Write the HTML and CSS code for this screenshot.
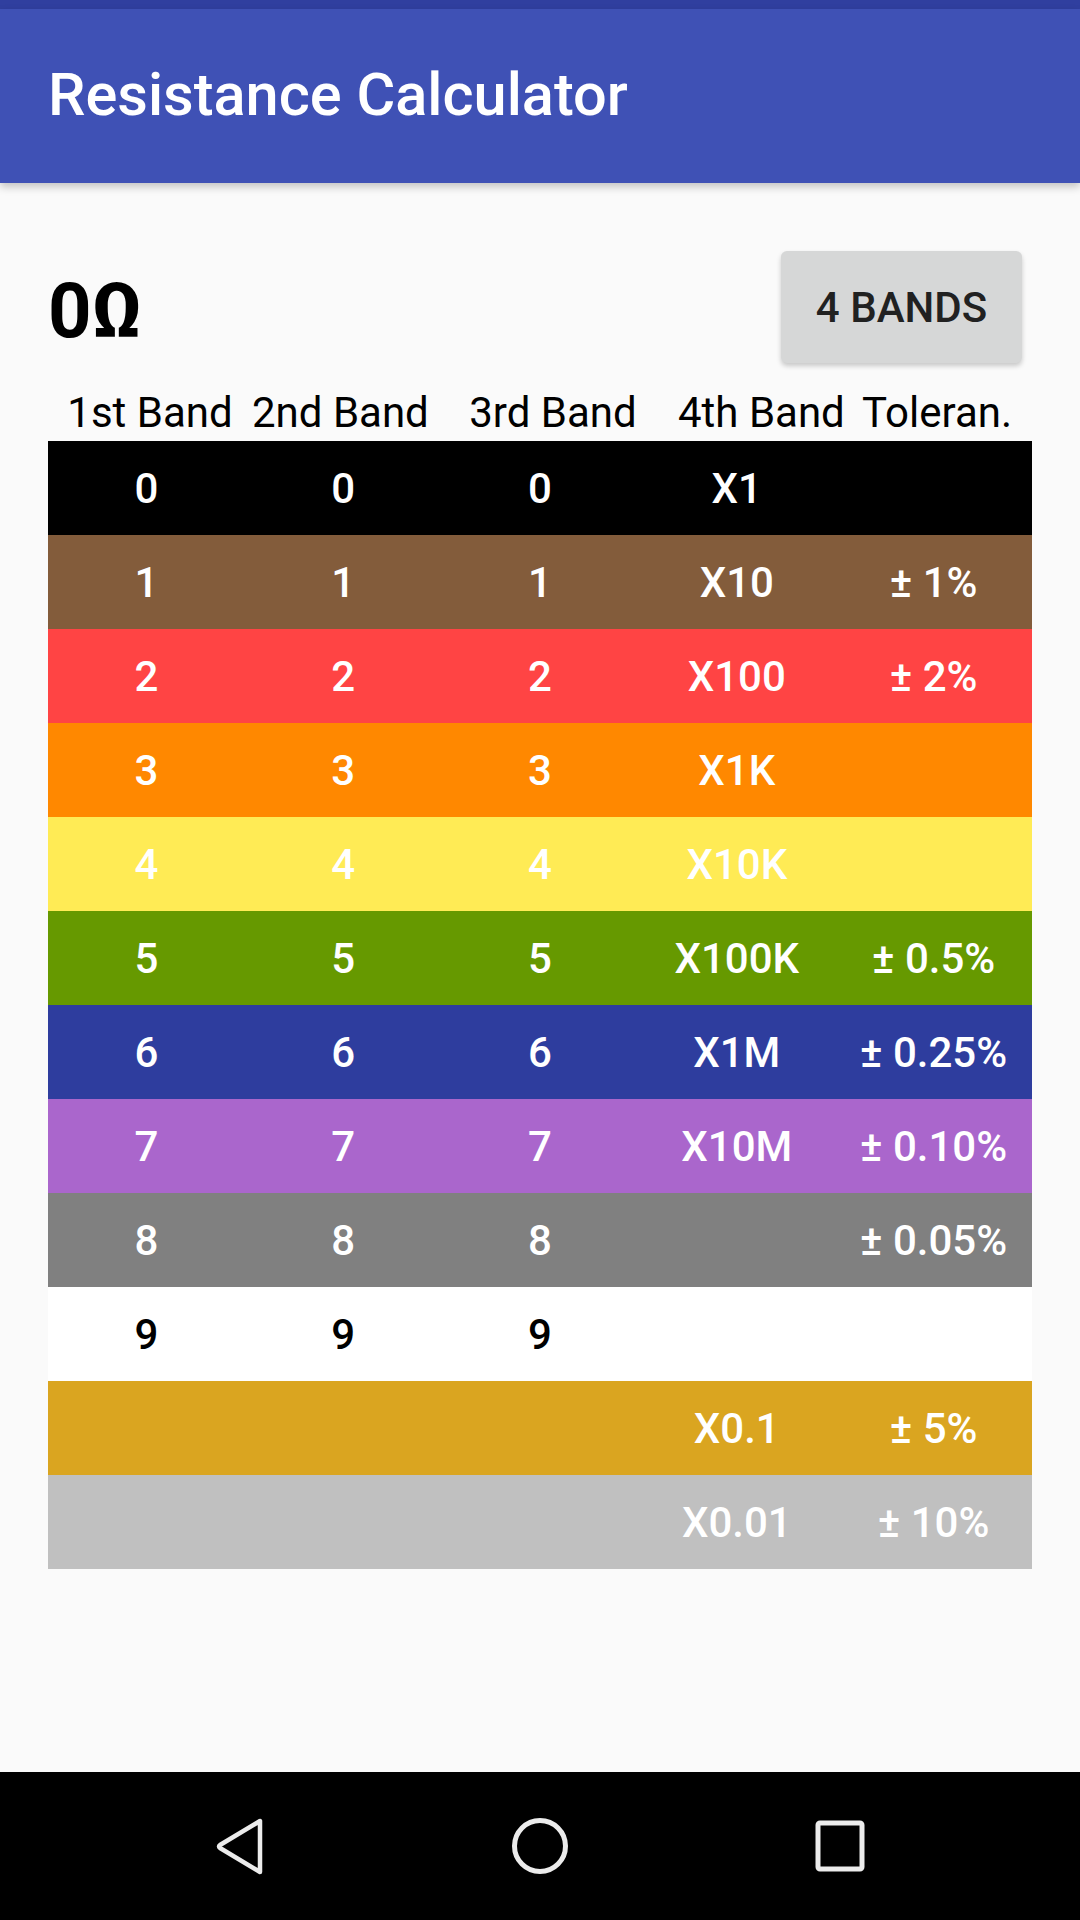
FILE: index.html
```html
<!DOCTYPE html>
<html lang="en">
<head>
    <meta charset="UTF-8">
    <meta name="viewport" content="width=device-width, initial-scale=1.0">
    <title>Resistance Calculator</title>
    <link rel="stylesheet" href="styles.css">
</head>
<body>
    <div class="screen">
        <div class="status-bar"></div>
        <header class="app-bar">
            <h1>Resistance Calculator</h1>
        </header>

        <main class="content">
            <div class="result-row">
                <div class="result">0Ω</div>
                <button class="bands-button">4 BANDS</button>
            </div>

            <div class="band-heading">
                <span>1st Band</span>
                <span>2nd Band</span>
                <span>3rd Band</span>
                <span>4th Band</span>
                <span>Toleran.</span>
            </div>

            <div class="band-table">
                <div class="band-row black"><span>0</span><span>0</span><span>0</span><span>X1</span><span></span></div>
                <div class="band-row brown"><span>1</span><span>1</span><span>1</span><span>X10</span><span>± 1%</span></div>
                <div class="band-row red"><span>2</span><span>2</span><span>2</span><span>X100</span><span>± 2%</span></div>
                <div class="band-row orange"><span>3</span><span>3</span><span>3</span><span>X1K</span><span></span></div>
                <div class="band-row yellow"><span>4</span><span>4</span><span>4</span><span>X10K</span><span></span></div>
                <div class="band-row green"><span>5</span><span>5</span><span>5</span><span>X100K</span><span>± 0.5%</span></div>
                <div class="band-row blue"><span>6</span><span>6</span><span>6</span><span>X1M</span><span>± 0.25%</span></div>
                <div class="band-row violet"><span>7</span><span>7</span><span>7</span><span>X10M</span><span>± 0.10%</span></div>
                <div class="band-row grey"><span>8</span><span>8</span><span>8</span><span></span><span>± 0.05%</span></div>
                <div class="band-row white"><span>9</span><span>9</span><span>9</span><span></span><span></span></div>
                <div class="band-row gold"><span></span><span></span><span></span><span>X0.1</span><span>± 5%</span></div>
                <div class="band-row silver"><span></span><span></span><span></span><span>X0.01</span><span>± 10%</span></div>
            </div>
        </main>

        <nav class="nav-bar">
            <svg class="nav-icon" viewBox="0 0 60 60">
                <path d="M50 5 L50 56 L10 32 Q8 30.5 10 29 Z" fill="none" stroke="#ececec" stroke-width="4.5" stroke-linejoin="round"/>
            </svg>
            <svg class="nav-icon" viewBox="0 0 60 60">
                <circle cx="30" cy="30" r="25.5" fill="none" stroke="#ececec" stroke-width="5"/>
            </svg>
            <svg class="nav-icon" viewBox="0 0 60 60">
                <rect x="8" y="7" width="44" height="46" rx="2" fill="none" stroke="#ececec" stroke-width="5"/>
            </svg>
        </nav>
    </div>
</body>
</html>
```

FILE: styles.css
```css
* {
    box-sizing: border-box;
    margin: 0;
    padding: 0;
}

body {
    font-family: Roboto, "Noto Sans", sans-serif;
    background-color: #fafafa;
    color: #000;
}

.screen {
    display: flex;
    flex-direction: column;
    min-height: 100vh;
}

.status-bar {
    height: 9px;
    background-color: #303f9f;
}

.app-bar {
    height: 174px;
    display: flex;
    align-items: center;
    padding-left: 48px;
    background-color: #3f51b5;
    box-shadow: 0 4px 8px rgba(0, 0, 0, 0.22);
    position: relative;
    z-index: 1;
}

.app-bar h1 {
    font-size: 59.5px;
    font-weight: 500;
    color: #fff;
    line-height: 1;
}

.content {
    padding: 68px 48px 0;
}

.result-row {
    display: flex;
    justify-content: space-between;
    align-items: center;
    padding-right: 10px;
}

.result {
    font-size: 76px;
    font-weight: 700;
    line-height: 1;
    margin-top: 8px;
}

.bands-button {
    width: 241px;
    height: 112px;
    font-family: Roboto, sans-serif;
    font-size: 42px;
    font-weight: 500;
    color: #212121;
    background-color: #d6d7d7;
    border: none;
    border-radius: 6px;
    box-shadow: 0 3px 5px rgba(0, 0, 0, 0.2);
}

.band-heading {
    display: grid;
    grid-template-columns: 204px 176px 250px 164px 190px;
    margin-top: 24px;
    margin-bottom: 2px;
    font-size: 42px;
    line-height: 52px;
    text-align: center;
    white-space: nowrap;
}

.band-row {
    display: grid;
    grid-template-columns: repeat(5, 1fr);
    height: 94px;
    align-items: center;
    text-align: center;
    font-size: 42px;
    font-weight: 500;
    color: #fff;
}

.black { background-color: #000; }
.brown { background-color: #835c3b; }
.red { background-color: #ff4444; }
.orange { background-color: #ff8800; }
.yellow { background-color: #ffeb55; }
.green { background-color: #669900; }
.blue { background-color: #2e3d9e; }
.violet { background-color: #aa66cc; }
.grey { background-color: #808080; }
.white { background-color: #fff; color: #000; }
.gold { background-color: #daa520; }
.silver { background-color: #c0c0c0; }

.nav-bar {
    margin-top: auto;
    height: 148px;
    display: flex;
    justify-content: center;
    align-items: center;
    gap: 240px;
    background-color: #000;
}

.nav-icon {
    width: 60px;
    height: 60px;
}
```
